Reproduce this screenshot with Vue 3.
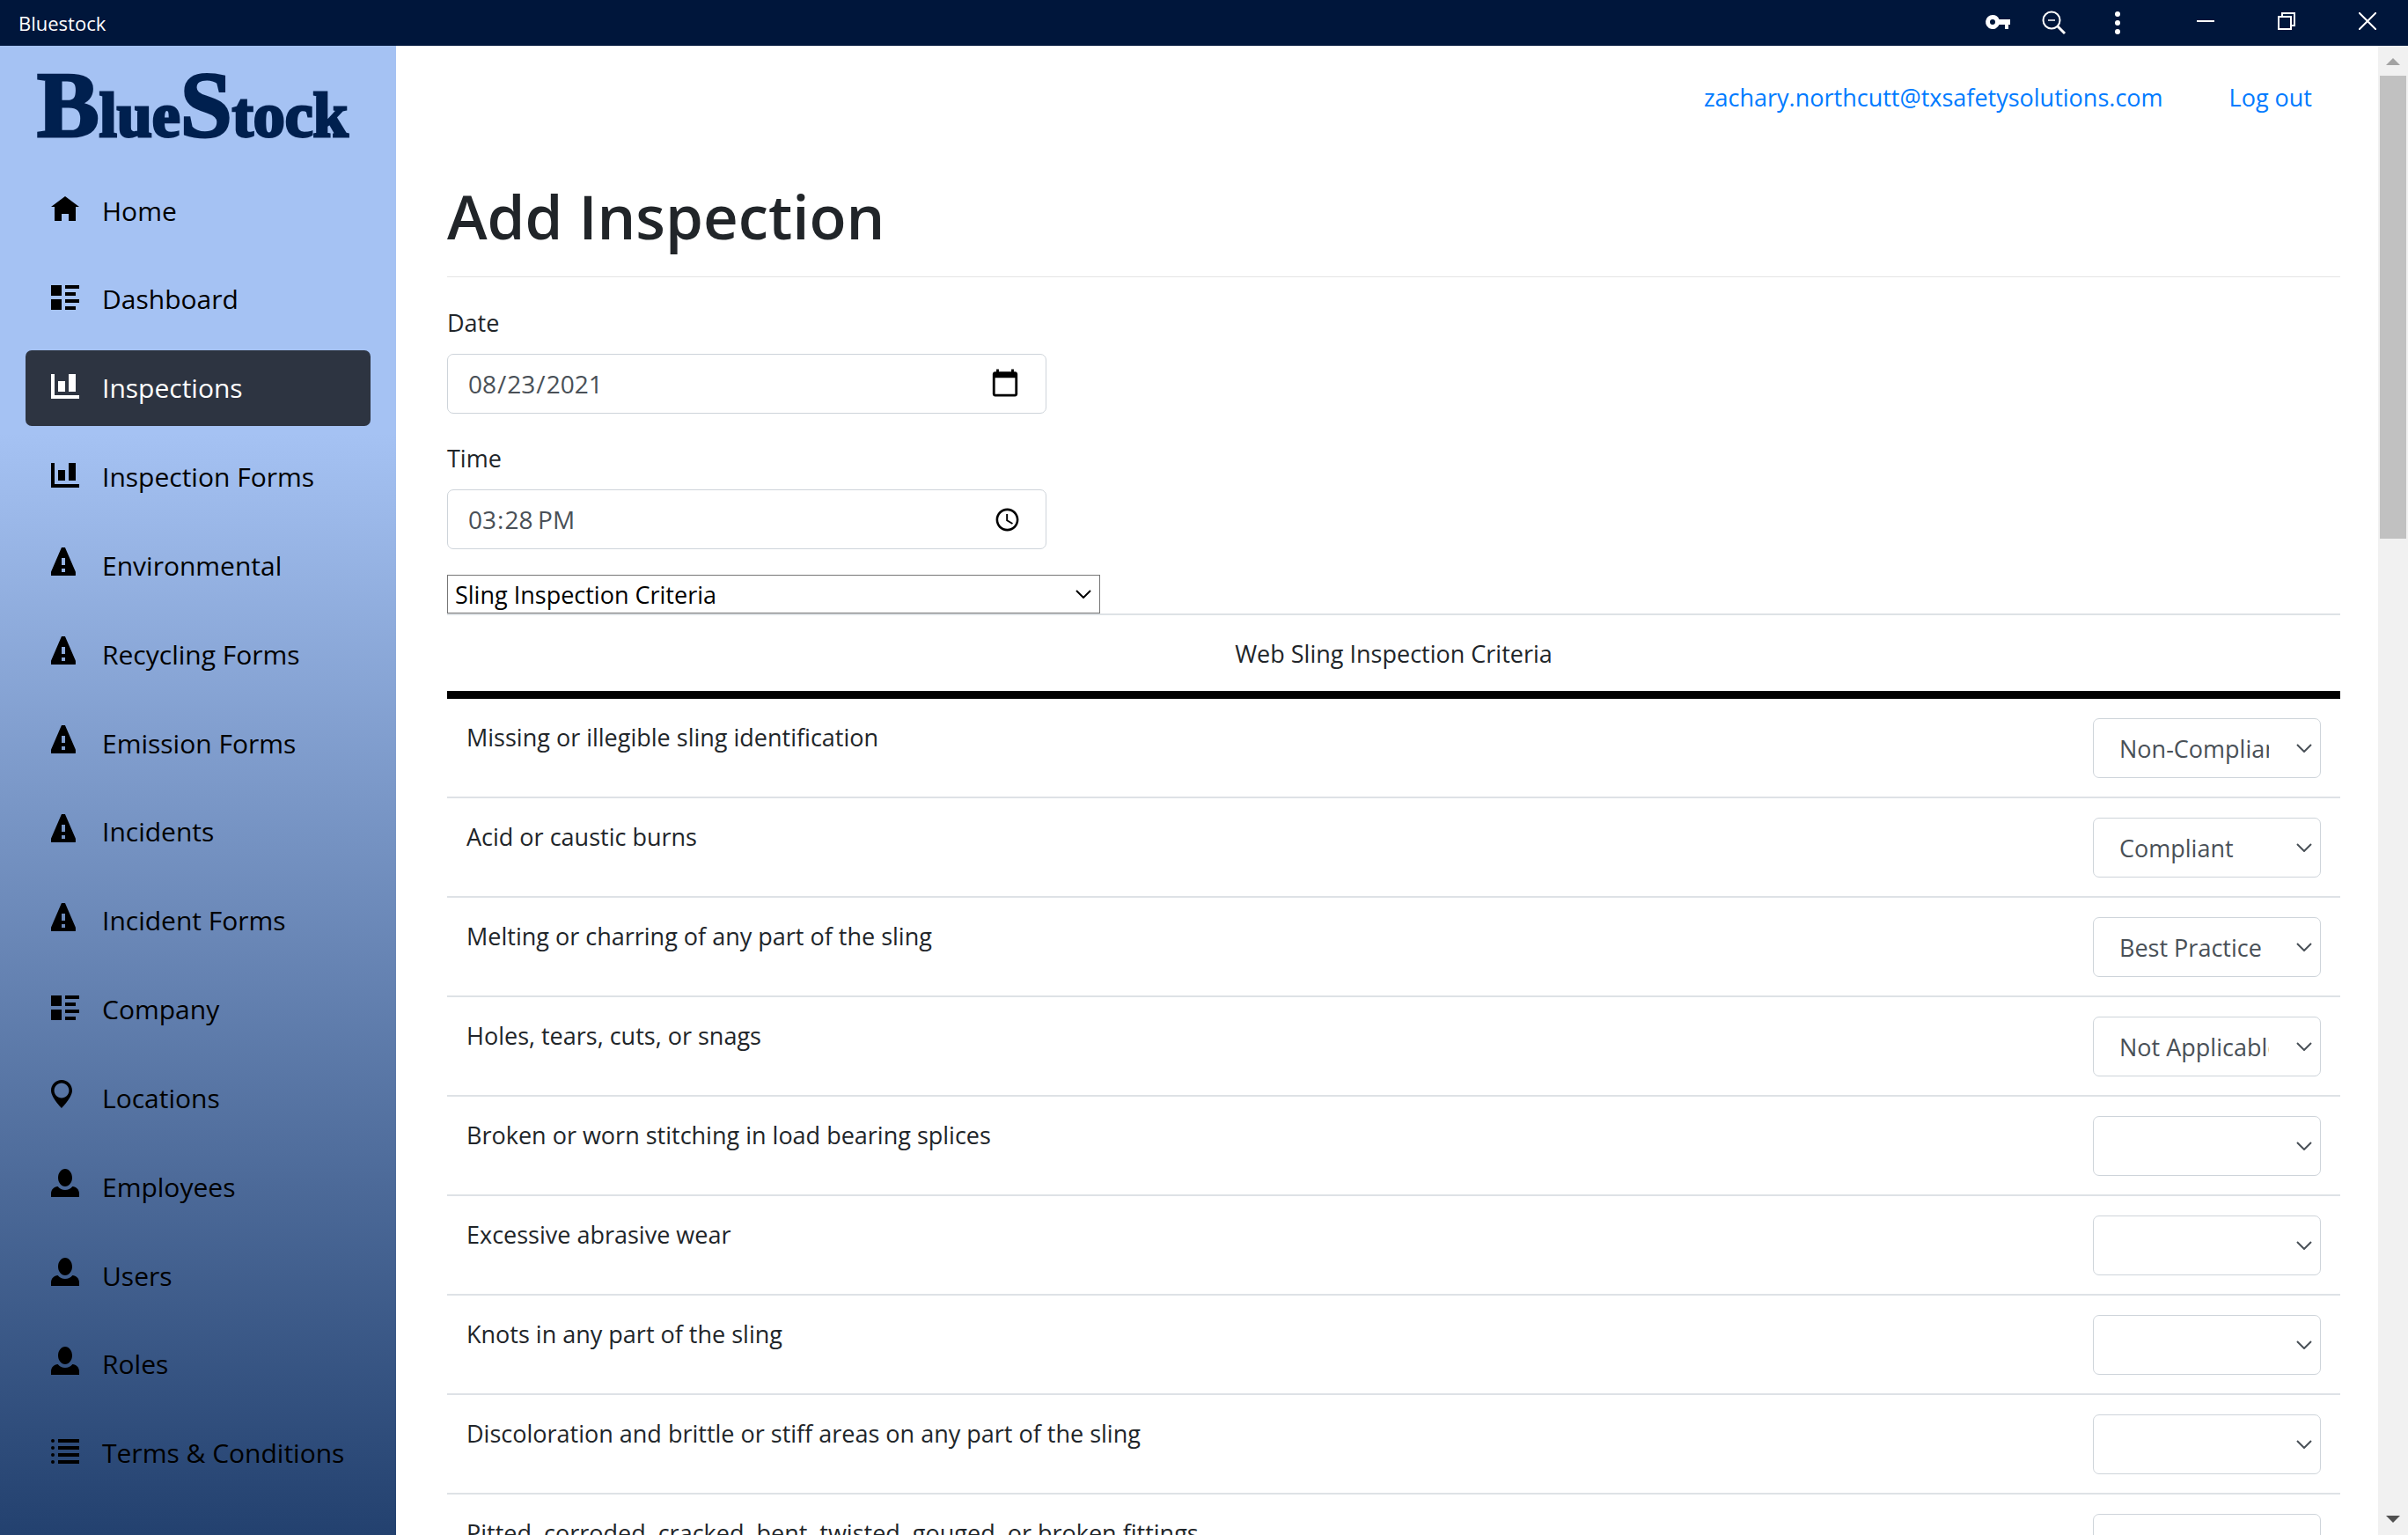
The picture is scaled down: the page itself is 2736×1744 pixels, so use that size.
<script setup>
import { ref } from 'vue'

const icons = {
  home: { box: '0 -1 8 8', path: 'M4 0l-4 3h1v4h2v-2h2v2h2v-4.03l1 .03-4-3z' },
  dashboard: { box: '0 -1 8 8', path: 'M0 0v3h3v-3h-3zm4 0v1h4v-1h-4zm0 2v1h3v-1h-3zm-4 2v3h3v-3h-3zm4 0v1h4v-1h-4zm0 2v1h3v-1h-3z' },
  chart: { box: '0 -1 8 8', path: 'M0 0v7h8v-1h-7v-6h-1zm5 0v5h2v-5h-2zm-3 2v3h2v-3h-2z' },
  warning: { box: '0 0 8 8', path: 'M3.09 0c-.06 0-.1.04-.13.09l-2.94 6.81c-.02.05-.03.13-.03.19v.81c0 .05.04.09.09.09h6.81c.05 0 .09-.04.09-.09v-.81c0-.05-.01-.14-.03-.19l-2.94-6.81c-.02-.05-.07-.09-.13-.09h-.81zm-.09 3h1v2h-1v-2zm0 3h1v1h-1v-1z' },
  marker: { box: '0 0 8 8', path: 'M3 0c-1.66 0-3 1.34-3 3 0 2 3 5 3 5s3-3 3-5c0-1.66-1.34-3-3-3zm0 .9c1.16 0 2.1.94 2.1 2.1 0 1.16-.94 2.1-2.1 2.1-1.16 0-2.1-.94-2.1-2.1 0-1.16.94-2.1 2.1-2.1z' },
  person: { box: '0 0 8 8', path: 'M4 0c-1.1 0-2 1.12-2 2.5s.9 2.5 2 2.5 2-1.12 2-2.5-.9-2.5-2-2.5zm-2.09 5c-1.06.05-1.91.92-1.91 2v1h8v-1c0-1.08-.84-1.95-1.91-2-.54.61-1.28 1-2.09 1-.81 0-1.55-.39-2.09-1z' },
  list: { box: '0 -1 8 8', path: 'M.5 0a.5.5 0 100 1 .5.5 0 000-1zm1.5 0v1h6v-1h-6zm-1.5 2a.5.5 0 100 1 .5.5 0 000-1zm1.5 0v1h6v-1h-6zm-1.5 2a.5.5 0 100 1 .5.5 0 000-1zm1.5 0v1h6v-1h-6zm-1.5 2a.5.5 0 100 1 .5.5 0 000-1zm1.5 0v1h6v-1h-6z' }
}

const navItems = [
  { label: 'Home', icon: 'home' },
  { label: 'Dashboard', icon: 'dashboard' },
  { label: 'Inspections', icon: 'chart' },
  { label: 'Inspection Forms', icon: 'chart' },
  { label: 'Environmental', icon: 'warning' },
  { label: 'Recycling Forms', icon: 'warning' },
  { label: 'Emission Forms', icon: 'warning' },
  { label: 'Incidents', icon: 'warning' },
  { label: 'Incident Forms', icon: 'warning' },
  { label: 'Company', icon: 'dashboard' },
  { label: 'Locations', icon: 'marker' },
  { label: 'Employees', icon: 'person' },
  { label: 'Users', icon: 'person' },
  { label: 'Roles', icon: 'person' },
  { label: 'Terms & Conditions', icon: 'list' }
]
const activeItem = ref('Inspections')

const date = ref('2021-08-23')
const time = ref('15:28')
const form = ref('Sling Inspection Criteria')

const results = ['', 'Compliant', 'Non-Compliant', 'Best Practice', 'Not Applicable']

const criteria = ref([
  { text: 'Missing or illegible sling identification', result: 'Non-Compliant' },
  { text: 'Acid or caustic burns', result: 'Compliant' },
  { text: 'Melting or charring of any part of the sling', result: 'Best Practice' },
  { text: 'Holes, tears, cuts, or snags', result: 'Not Applicable' },
  { text: 'Broken or worn stitching in load bearing splices', result: '' },
  { text: 'Excessive abrasive wear', result: '' },
  { text: 'Knots in any part of the sling', result: '' },
  { text: 'Discoloration and brittle or stiff areas on any part of the sling', result: '' },
  { text: 'Pitted, corroded, cracked, bent, twisted, gouged, or broken fittings', result: '' }
])
</script>

<template>
  <div class="window">
    <header class="titlebar">
      <span class="app-name">Bluestock</span>
      <div class="tools">
        <button class="tool" aria-label="Saved passwords">
          <svg width="30" height="30" viewBox="0 0 30 30">
            <path fill="#fff" fill-rule="evenodd" d="M9 6a8 8 0 107.500 11H23v5h4v-5h2v-6H16.500A8 8 0 009 6zm0 5a3 3 0 110 6 3 3 0 010-6z" />
          </svg>
        </button>
        <button class="tool" aria-label="Zoom out">
          <svg width="30" height="30" viewBox="0 0 30 30" fill="none" stroke="#fff">
            <circle cx="12" cy="12" r="9.500" stroke-width="2" />
            <path d="M8 12h8" stroke-width="1.500" />
            <path d="M19 19l8 8" stroke-width="3" />
          </svg>
        </button>
        <button class="tool" aria-label="Menu">
          <svg width="46" height="30" viewBox="0 0 46 30" fill="#fff">
            <circle cx="23" cy="5" r="3" />
            <circle cx="23" cy="15" r="3" />
            <circle cx="23" cy="25" r="3" />
          </svg>
        </button>
      </div>
      <div class="window-buttons">
        <button aria-label="Minimize">
          <svg width="20" height="20" viewBox="0 0 20 20"><path d="M0 10h20" stroke="#fff" stroke-width="2" /></svg>
        </button>
        <button aria-label="Restore">
          <svg width="20" height="20" viewBox="0 0 20 20" fill="none" stroke="#fff" stroke-width="2">
            <path d="M1 5h14v14H1zM5 5V1h14v14h-4" />
          </svg>
        </button>
        <button aria-label="Close">
          <svg width="20" height="20" viewBox="0 0 20 20"><path d="M0 0l20 20M20 0L0 20" stroke="#fff" stroke-width="2" /></svg>
        </button>
      </div>
    </header>

    <div class="page">
      <aside class="sidebar">
        <a class="logo" href="#"><span class="big">B</span>lue<span class="big">S</span>tock</a>
        <nav class="nav">
          <a
            v-for="item in navItems"
            :key="item.label"
            href="#"
            class="nav-link"
            :class="{ active: item.label === activeItem }"
            @click.prevent="activeItem = item.label"
          >
            <svg class="nav-icon" :viewBox="icons[item.icon].box">
              <path fill="currentColor" :d="icons[item.icon].path" />
            </svg>
            {{ item.label }}
          </a>
        </nav>
      </aside>

      <main class="main">
        <div class="top-row">
          <a href="#">zachary.northcutt@txsafetysolutions.com</a>
          <a href="#">Log out</a>
        </div>

        <div class="content">
          <h1>Add Inspection</h1>
          <hr>

          <div class="form-group">
            <label for="date">Date</label>
            <input id="date" v-model="date" type="date" class="form-control">
          </div>
          <div class="form-group">
            <label for="time">Time</label>
            <input id="time" v-model="time" type="time" class="form-control">
          </div>

          <div class="select-wrap form-select">
            <select v-model="form" aria-label="Inspection form">
              <option>Sling Inspection Criteria</option>
            </select>
            <svg class="chevron" viewBox="0 0 18 10"><path d="M1 1l8 8 8-8" /></svg>
          </div>

          <table class="table">
            <thead>
              <tr>
                <th colspan="2">Web Sling Inspection Criteria</th>
              </tr>
            </thead>
            <tbody>
              <tr v-for="row in criteria" :key="row.text">
                <td>{{ row.text }}</td>
                <td class="result">
                  <div class="select-wrap result-select">
                    <select v-model="row.result" :aria-label="row.text">
                      <option v-for="option in results" :key="option" :value="option">{{ option }}</option>
                    </select>
                    <svg class="chevron" viewBox="0 0 18 10"><path d="M1 1l8 8 8-8" /></svg>
                  </div>
                </td>
              </tr>
            </tbody>
          </table>
        </div>
      </main>

      <!-- Page scrollbar -->
      <div class="scrollbar">
        <svg class="arrow up" viewBox="0 0 16 8"><path d="M8 0l8 8H0z" /></svg>
        <div class="track"><div class="thumb"></div></div>
        <svg class="arrow down" viewBox="0 0 16 8"><path d="M8 8l8-8H0z" /></svg>
      </div>
    </div>
  </div>
</template>

<style>
body {
  margin: 0;
  overflow: hidden;
}
</style>

<style scoped>
* {
  box-sizing: border-box;
}

.window {
  display: flex;
  flex-direction: column;
  height: 100vh;
  overflow: hidden;
  background: #fff;
  color: #212529;
  font-family: "Open Sans", "Noto Sans", sans-serif;
  font-size: 27px;
  line-height: 43px;
}

a {
  color: #007bff;
  text-decoration: none;
}

/* Title bar */
.titlebar {
  display: flex;
  align-items: center;
  flex: none;
  height: 52px;
  padding-left: 21px;
  background: #00163b;
  color: #fff;
}

.app-name {
  flex: 1;
  font-size: 22px;
}

.titlebar button {
  display: flex;
  align-items: center;
  justify-content: center;
  height: 52px;
  padding: 0;
  border: none;
  background: none;
}

.tools {
  display: flex;
  gap: 34px;
  padding-right: 31px;
}

.window-buttons {
  display: flex;
}

.window-buttons button {
  width: 92px;
  padding-bottom: 4px;
}

/* Layout */
.page {
  display: flex;
  flex: 1;
  min-height: 0;
}

.sidebar {
  display: flex;
  flex-direction: column;
  flex: none;
  width: 450px;
  padding-bottom: 50px;
  background: linear-gradient(180deg, #a5c2f3 26%, #23416f 100%);
}

.logo {
  flex: none;
  height: 144px;
  padding-left: 42px;
  color: #00204f;
  font-family: "Liberation Serif", serif;
  font-size: 72px;
  font-weight: bold;
  line-height: 136px;
  white-space: nowrap;
  -webkit-text-stroke: 3px #00204f;
}

.logo .big {
  font-size: 106px;
}

.nav {
  display: flex;
  flex: 1;
  flex-direction: column;
  justify-content: space-between;
  padding: 0 29px;
}

.nav-link {
  display: flex;
  align-items: center;
  gap: 26px;
  height: 86px;
  padding-left: 29px;
  border-radius: 7px;
  color: #000;
  font-size: 30px;
  white-space: nowrap;
}

.nav-link.active {
  background: #2d3441;
  color: #fff;
}

.nav-icon {
  width: 32px;
  height: 32px;
  margin-bottom: 8px;
}

/* Main column */
.main {
  flex: 1;
  min-width: 0;
  overflow: hidden;
}

.top-row {
  display: flex;
  align-items: center;
  justify-content: flex-end;
  gap: 75px;
  height: 117px;
  padding-right: 75px;
}

.content {
  padding: 34px 43px 0 58px;
}

h1 {
  margin: 0;
  font-size: 69px;
  font-weight: 600;
  line-height: 84px;
}

hr {
  height: 1px;
  margin: 27px 0 30px;
  border: none;
  background: #e5e5e5;
}

.form-group {
  width: 681px;
  margin-bottom: 29px;
}

.form-group label {
  display: block;
  margin-bottom: 14px;
}

.form-control {
  display: block;
  width: 100%;
  height: 68px;
  padding: 11px 28px 11px 22px;
  border: 1px solid #ced4da;
  border-radius: 7px;
  background: #fff;
  color: #495057;
  font: inherit;
  font-size: 28px;
}

.form-control::-webkit-calendar-picker-indicator {
  width: 31px;
  height: 31px;
  padding: 0;
}

.form-control[type="date"]::-webkit-calendar-picker-indicator {
  width: 36px;
  height: 36px;
}

/* Selects */
.select-wrap {
  display: grid;
  align-items: center;
}

.select-wrap > * {
  grid-area: 1 / 1;
}

.select-wrap select {
  width: 100%;
  appearance: none;
  background: #fff;
  font: inherit;
}

.chevron {
  justify-self: end;
  width: 18px;
  height: 10px;
  margin-right: 10px;
  fill: none;
  stroke: #495057;
  stroke-width: 2;
  pointer-events: none;
}

.form-select {
  width: 742px;
}

.form-select select {
  height: 44px;
  padding: 0 40px 0 8px;
  border: 1px solid #767676;
  border-radius: 0;
  color: #000;
}

.form-select .chevron {
  stroke: #000;
}

.result-select {
  width: 259px;
}

.result-select select {
  height: 68px;
  padding: 0 58px 0 29px;
  border: 1px solid #ced4da;
  border-radius: 7px;
  color: #495057;
}

/* Criteria table */
.table {
  width: 100%;
  border-spacing: 0;
}

.table th {
  padding: 22px 22px 21px;
  border-top: 2px solid #dee2e6;
  border-bottom: 9px solid #000;
  font-weight: normal;
  text-align: center;
}

.table td {
  padding: 22px 22px 21px;
  border-bottom: 2px solid #dee2e6;
  vertical-align: top;
}

.table .result {
  width: 303px;
}

/* Scrollbar */
.scrollbar {
  display: flex;
  flex-direction: column;
  align-items: center;
  flex: none;
  width: 34px;
  padding: 14px 0;
  background: #f1f1f1;
}

.arrow {
  flex: none;
  width: 16px;
  height: 8px;
}

.arrow.up {
  fill: #a3a3a3;
}

.arrow.down {
  fill: #505050;
}

.track {
  flex: 1;
  width: 30px;
  padding: 12px 0;
}

.thumb {
  height: 32.4%;
  background: #c1c1c1;
}
</style>
